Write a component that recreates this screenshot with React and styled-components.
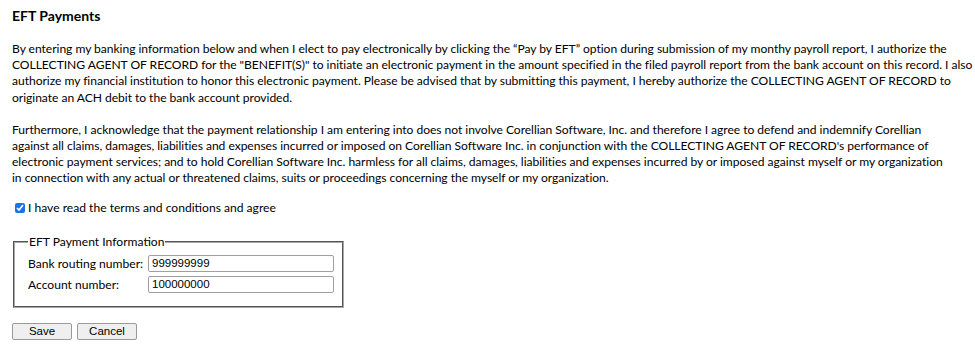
import React, { useState } from 'react';
import styled, { createGlobalStyle } from 'styled-components';

const GlobalStyle = createGlobalStyle`
  html, body {
    margin: 0;
    padding: 0;
    background: #ffffff;
  }
  body {
    font-family: Lato, 'Open Sans', sans-serif;
    color: #000;
  }
`;

const Page = styled.div`
  padding: 7px 12px;
  width: 975px;
  box-sizing: border-box;
`;

const Title = styled.h2`
  margin: 0 0 17px 0;
  font-size: 14px;
  font-weight: bold;
  line-height: 17px;
`;

const Terms = styled.div`
  display: flex;
  flex-direction: column;
  gap: 16px;
  margin-bottom: 13px;
`;

const Paragraph = styled.p`
  margin: 0;
  font-size: 12.1px;
  line-height: 16.2px;
  letter-spacing: -0.04px;
  white-space: nowrap;
`;

const AgreeRow = styled.label`
  display: flex;
  align-items: center;
  gap: 3px;
  margin: 0 0 19px 0;
  font-size: 12.1px;
  line-height: 16px;
`;

const Check = styled.input`
  width: 10px;
  height: 10px;
  margin: 0 0 0 3px;
  accent-color: #1a73e8;
`;

const Fields = styled.fieldset`
  width: 328px;
  box-sizing: border-box;
  margin: 0 0 15px 1px;
  padding: 6px 8px 13px 13px;
  border: 2px groove #a8a8a8;
`;

const Legend = styled.legend`
  padding: 0 1px;
  font-size: 12.1px;
  line-height: 14px;
`;

const FieldGrid = styled.div`
  display: grid;
  grid-template-columns: 120px 186px;
  row-gap: 4px;
  align-items: center;
`;

const FieldLabel = styled.label`
  font-size: 12.1px;
  line-height: 17px;
  white-space: nowrap;
`;

const TextInput = styled.input`
  height: 17px;
  box-sizing: border-box;
  border: 1px solid #a0a0a0;
  border-radius: 2px;
  padding: 0 3px;
  font-family: 'Liberation Sans', Arial, sans-serif;
  font-size: 11.5px;
  color: #000;
  outline: none;
`;

const Buttons = styled.div`
  display: flex;
  gap: 5px;
`;

const Button = styled.button`
  width: 60px;
  height: 17px;
  padding: 0;
  border: 1px solid #9a9a9a;
  border-radius: 2px;
  background: #efefef;
  font-family: 'Liberation Sans', Arial, sans-serif;
  font-size: 11.5px;
  line-height: 15px;
  color: #000;
`;

export default function App() {
  const [agree, setAgree] = useState(true);
  const [routing, setRouting] = useState('999999999');
  const [account, setAccount] = useState('100000000');

  return (
    <Page>
      <GlobalStyle />
      <Title>EFT Payments</Title>
      <Terms>
        <Paragraph>
          By entering my banking information below and when I elect to pay electronically by clicking the “Pay by EFT” option during submission of my monthy payroll report, I authorize the
          <br />
          COLLECTING AGENT OF RECORD for the "BENEFIT(S)" to initiate an electronic payment in the amount specified in the filed payroll report from the bank account on this record. I also
          <br />
          authorize my financial institution to honor this electronic payment. Please be advised that by submitting this payment, I hereby authorize the COLLECTING AGENT OF RECORD to
          <br />
          originate an ACH debit to the bank account provided.
        </Paragraph>
        <Paragraph>
          Furthermore, I acknowledge that the payment relationship I am entering into does not involve Corellian Software, Inc. and therefore I agree to defend and indemnify Corellian
          <br />
          against all claims, damages, liabilities and expenses incurred or imposed on Corellian Software Inc. in conjunction with the COLLECTING AGENT OF RECORD's performance of
          <br />
          electronic payment services; and to hold Corellian Software Inc. harmless for all claims, damages, liabilities and expenses incurred by or imposed against myself or my organization
          <br />
          in connection with any actual or threatened claims, suits or proceedings concerning the myself or my organization.
        </Paragraph>
      </Terms>
      <AgreeRow>
        <Check type="checkbox" checked={agree} onChange={e => setAgree(e.target.checked)} />
        I have read the terms and conditions and agree
      </AgreeRow>
      <Fields>
        <Legend>EFT Payment Information</Legend>
        <FieldGrid>
          <FieldLabel htmlFor="routing">Bank routing number:</FieldLabel>
          <TextInput id="routing" value={routing} onChange={e => setRouting(e.target.value)} />
          <FieldLabel htmlFor="account">Account number:</FieldLabel>
          <TextInput id="account" value={account} onChange={e => setAccount(e.target.value)} />
        </FieldGrid>
      </Fields>
      <Buttons>
        <Button type="button">Save</Button>
        <Button type="button">Cancel</Button>
      </Buttons>
    </Page>
  );
}
